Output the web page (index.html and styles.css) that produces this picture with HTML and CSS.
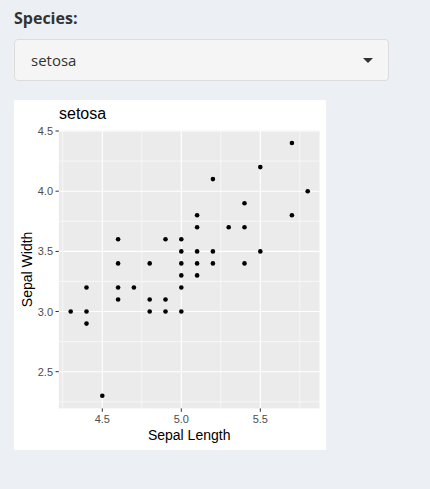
FILE: index.html
```html
<!DOCTYPE html>
<html>
<head>
<meta charset="utf-8">
<link rel="stylesheet" href="styles.css">
</head>
<body>
<div class="page">
  <label class="field-label">Species:</label>
  <div class="select">
    <span class="select-value">setosa</span>
    <span class="caret"></span>
  </div>
  <div class="plot">
    <svg class="plot-svg" width="312" height="350" viewBox="0 0 312 350" xmlns="http://www.w3.org/2000/svg">
      <rect x="0" y="0" width="312" height="350" fill="#ffffff"/>
      <text class="title" x="45" y="19">setosa</text>
      <rect x="44.85" y="30.4" width="260.7" height="278" fill="#EBEBEB"/>
      <g class="minor">
        <line x1="48.8" y1="30.4" x2="48.8" y2="308.4"/>
        <line x1="127.8" y1="30.4" x2="127.8" y2="308.4"/>
        <line x1="206.8" y1="30.4" x2="206.8" y2="308.4"/>
        <line x1="285.8" y1="30.4" x2="285.8" y2="308.4"/>
        <line x1="44.85" y1="61.1" x2="305.55" y2="61.1"/>
        <line x1="44.85" y1="121.3" x2="305.55" y2="121.3"/>
        <line x1="44.85" y1="181.4" x2="305.55" y2="181.4"/>
        <line x1="44.85" y1="241.6" x2="305.55" y2="241.6"/>
        <line x1="44.85" y1="301.8" x2="305.55" y2="301.8"/>
      </g>
      <g class="major">
        <line x1="88.3" y1="30.4" x2="88.3" y2="308.4"/>
        <line x1="167.3" y1="30.4" x2="167.3" y2="308.4"/>
        <line x1="246.3" y1="30.4" x2="246.3" y2="308.4"/>
        <line x1="44.85" y1="31" x2="305.55" y2="31"/>
        <line x1="44.85" y1="91.2" x2="305.55" y2="91.2"/>
        <line x1="44.85" y1="151.4" x2="305.55" y2="151.4"/>
        <line x1="44.85" y1="211.5" x2="305.55" y2="211.5"/>
        <line x1="44.85" y1="271.7" x2="305.55" y2="271.7"/>
      </g>
      <g class="pts">
        <circle cx="183.1" cy="151.4" r="2.3"/>
        <circle cx="151.5" cy="211.5" r="2.3"/>
        <circle cx="119.9" cy="187.5" r="2.3"/>
        <circle cx="104.1" cy="199.5" r="2.3"/>
        <circle cx="167.3" cy="139.3" r="2.3"/>
        <circle cx="230.5" cy="103.2" r="2.3"/>
        <circle cx="104.1" cy="163.4" r="2.3"/>
        <circle cx="167.3" cy="163.4" r="2.3"/>
        <circle cx="72.5" cy="223.6" r="2.3"/>
        <circle cx="151.5" cy="199.5" r="2.3"/>
        <circle cx="230.5" cy="127.3" r="2.3"/>
        <circle cx="135.7" cy="163.4" r="2.3"/>
        <circle cx="135.7" cy="211.5" r="2.3"/>
        <circle cx="56.7" cy="211.5" r="2.3"/>
        <circle cx="293.7" cy="91.2" r="2.3"/>
        <circle cx="277.9" cy="43.0" r="2.3"/>
        <circle cx="277.9" cy="115.2" r="2.3"/>
        <circle cx="183.1" cy="115.2" r="2.3"/>
        <circle cx="230.5" cy="163.4" r="2.3"/>
        <circle cx="183.1" cy="127.3" r="2.3"/>
        <circle cx="104.1" cy="139.3" r="2.3"/>
        <circle cx="183.1" cy="175.4" r="2.3"/>
        <circle cx="167.3" cy="211.5" r="2.3"/>
        <circle cx="198.9" cy="151.4" r="2.3"/>
        <circle cx="198.9" cy="163.4" r="2.3"/>
        <circle cx="135.7" cy="199.5" r="2.3"/>
        <circle cx="198.9" cy="79.1" r="2.3"/>
        <circle cx="246.3" cy="67.1" r="2.3"/>
        <circle cx="167.3" cy="187.5" r="2.3"/>
        <circle cx="246.3" cy="151.4" r="2.3"/>
        <circle cx="151.5" cy="139.3" r="2.3"/>
        <circle cx="72.5" cy="211.5" r="2.3"/>
        <circle cx="183.1" cy="163.4" r="2.3"/>
        <circle cx="167.3" cy="151.4" r="2.3"/>
        <circle cx="88.3" cy="295.8" r="2.3"/>
        <circle cx="72.5" cy="187.5" r="2.3"/>
        <circle cx="104.1" cy="187.5" r="2.3"/>
        <circle cx="214.7" cy="127.3" r="2.3"/>
        <circle cx="167.3" cy="175.4" r="2.3"/>
      </g>
      <g class="ticks">
        <line x1="41.5" y1="31" x2="44.85" y2="31"/>
        <line x1="41.5" y1="91.2" x2="44.85" y2="91.2"/>
        <line x1="41.5" y1="151.4" x2="44.85" y2="151.4"/>
        <line x1="41.5" y1="211.5" x2="44.85" y2="211.5"/>
        <line x1="41.5" y1="271.7" x2="44.85" y2="271.7"/>
        <line x1="88.3" y1="308.4" x2="88.3" y2="311.8"/>
        <line x1="167.3" y1="308.4" x2="167.3" y2="311.8"/>
        <line x1="246.3" y1="308.4" x2="246.3" y2="311.8"/>
      </g>
      <g class="ylab">
        <text x="39" y="35">4.5</text>
        <text x="39" y="95.2">4.0</text>
        <text x="39" y="155.4">3.5</text>
        <text x="39" y="215.5">3.0</text>
        <text x="39" y="275.7">2.5</text>
      </g>
      <g class="xlab">
        <text x="88.3" y="323.3">4.5</text>
        <text x="167.3" y="323.3">5.0</text>
        <text x="246.3" y="323.3">5.5</text>
      </g>
      <text class="axis-title" x="175.2" y="340" text-anchor="middle">Sepal Length</text>
      <text class="axis-title" x="0" y="0" text-anchor="middle" transform="translate(18 169.4) rotate(-90)">Sepal Width</text>
    </svg>
  </div>
</div>
</body>
</html>
```
FILE: styles.css
```css
html, body {
  margin: 0;
  padding: 0;
  background: #ecf0f5;
}
.page {
  padding: 6px 0 0 14px;
  font-family: "Open Sans", "Noto Sans", sans-serif;
  color: #333333;
}
.field-label {
  display: block;
  font-weight: 700;
  font-size: 16px;
  line-height: 24px;
  color: #333333;
  margin-bottom: 9px;
}
.select {
  box-sizing: border-box;
  width: 375px;
  height: 42px;
  background: #f5f5f5;
  border: 1px solid #dcdcdc;
  border-radius: 4px;
  display: flex;
  align-items: center;
  justify-content: space-between;
  padding: 0 15px 0 16px;
}
.select-value {
  font-size: 15px;
  color: #333333;
}
.caret {
  width: 0;
  height: 0;
  border-left: 5px solid transparent;
  border-right: 5px solid transparent;
  border-top: 5px solid #333333;
  margin-top: 1px;
}
.plot {
  margin-top: 19px;
  width: 312px;
  height: 350px;
}
.plot-svg {
  display: block;
  font-family: "Liberation Sans", Arial, sans-serif;
}
.title {
  font-size: 16px;
  fill: #000000;
}
.minor line {
  stroke: #ffffff;
  stroke-width: 0.6;
}
.major line {
  stroke: #ffffff;
  stroke-width: 1.1;
}
.pts circle {
  fill: #000000;
}
.ticks line {
  stroke: #333333;
  stroke-width: 1;
}
.ylab text {
  font-size: 11px;
  fill: #4d4d4d;
  text-anchor: end;
}
.xlab text {
  font-size: 11px;
  fill: #4d4d4d;
  text-anchor: middle;
}
.axis-title {
  font-size: 14px;
  fill: #000000;
}
```
